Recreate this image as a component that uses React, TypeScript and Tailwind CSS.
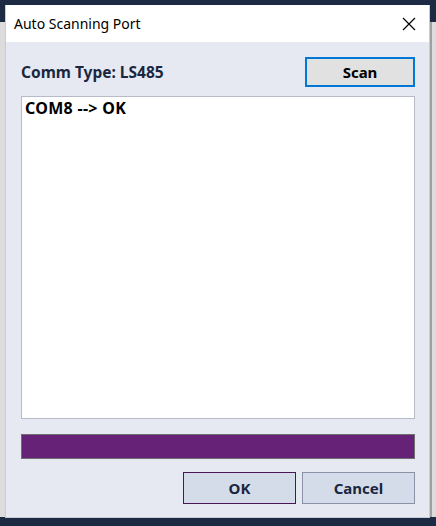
import React from "react";

export default function App() {
  const font = { fontFamily: '"Noto Sans", "Open Sans", sans-serif' };
  return (
    <div className="relative w-[436px] h-[526px] overflow-hidden bg-[#1d2a43]" style={font}>
      {/* window behind */}
      <div className="absolute left-0 right-0 top-[22px] bottom-[9px] bg-[#dcdcdc]">
        <div className="absolute right-[4px] top-0 bottom-0 w-[2px] bg-[#a0a0a0]" />
      </div>
      {/* dialog */}
      <div className="absolute left-[5px] top-[5px] w-[425px] h-[513px] flex flex-col bg-[#e6e9f2] border border-[#c8ccd6] border-t-0">
        <div className="h-[37px] bg-white flex items-center justify-between pl-[8px] pr-[13px] shrink-0">
          <span className="text-[14px] text-black leading-none pt-[1px]">Auto Scanning Port</span>
          <svg width="14" height="14" viewBox="0 0 14 14">
            <path d="M1 1L13 13M13 1L1 13" stroke="#000" strokeWidth="1.2" />
          </svg>
        </div>
        <div className="flex-1 flex flex-col pl-[15px] pr-[14px] pt-[15px] pb-[13px]">
          <div className="flex items-center justify-between h-[30px]">
            <span className="text-[15.5px] font-bold text-[#1a2740] pt-[1px]">Comm Type: LS485</span>
            <button className="w-[110px] h-[30px] bg-[#e1e1e1] border-2 border-[#0078d7] text-[15px] font-bold text-black flex items-center justify-center">
              Scan
            </button>
          </div>
          <div className="mt-[9px] h-[323px] bg-white border border-[#b8bcc8] px-[3px] pt-[1px]">
            <div className="text-[16px] font-bold text-black leading-[20px] tracking-[0.3px]">COM8 --&gt; OK</div>
          </div>
          <div className="mt-[15px] h-[25px] bg-[#662277] border border-[#6e6e6e]" />
          <div className="mt-[13px] flex justify-end gap-[6px]">
            <button className="w-[113px] h-[32px] bg-[#d5dce9] border border-[#4b1657] text-[15px] font-bold text-[#1a2740] flex items-center justify-center">
              OK
            </button>
            <button className="w-[113px] h-[32px] bg-[#d5dce9] border border-[#8a93a5] text-[15px] font-bold text-[#1a2740] flex items-center justify-center">
              Cancel
            </button>
          </div>
        </div>
      </div>
    </div>
  );
}
